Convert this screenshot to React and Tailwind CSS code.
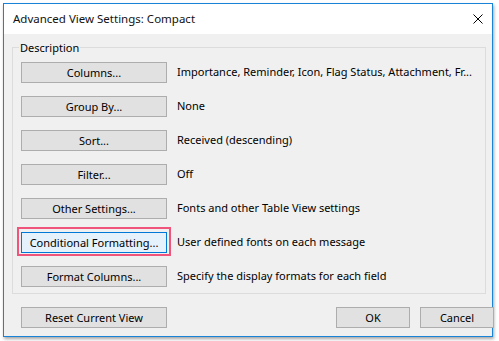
export default function App() {
  const rows = [
    ["Columns...", "Importance, Reminder, Icon, Flag Status, Attachment, Fr..."],
    ["Group By...", "None"],
    ["Sort...", "Received (descending)"],
    ["Filter...", "Off"],
    ["Other Settings...", "Fonts and other Table View settings"],
    ["Conditional Formatting...", "User defined fonts on each message"],
    ["Format Columns...", "Specify the display formats for each field"],
  ];
  const font = { fontFamily: '"Noto Sans", "Open Sans", sans-serif' };
  const btn =
    "h-[21px] border border-[#adadad] bg-[#e1e1e1] text-[11px] leading-none text-black flex items-center justify-center";
  return (
    <div className="w-[499px] h-[341px] bg-white pt-[3px] pl-[3px]" style={font}>
      <div className="w-[490px] h-[334px] border border-[#1883d7] flex flex-col shadow-[1px_2px_3px_rgba(0,0,0,0.35)]">
        <div className="h-[30px] bg-white flex items-center justify-between pl-[9px] pr-[9px]">
          <span className="text-[11.5px] text-[#111]">Advanced View Settings: Compact</span>
          <svg width="10" height="10" viewBox="0 0 10 10" className="mt-[-1px]">
            <path d="M0.5 0.5 L9.5 9.5 M9.5 0.5 L0.5 9.5" stroke="#000" strokeWidth="1" />
          </svg>
        </div>
        <div className="flex-1 bg-[#f0f0f0] flex flex-col pl-[8px]">
          <fieldset className="mt-[6px] w-[474px] border border-[#dcdcdc] pl-[8px] pt-[7px] pb-[6px] flex flex-col gap-[13px]">
            <legend className="text-[11px] leading-[15px] text-black px-[1px] ml-[-2px]">Description</legend>
            {rows.map(([b, d], i) => (
              <div key={b} className="flex items-center gap-[10px]">
                {i === 5 ? (
                  <div className="relative">
                    <div className="absolute left-[-4px] top-[-5px] w-[154px] h-[29px] border-2 border-[#f0547a] pointer-events-none" />
                    <div className={btn + " w-[146px] !border-[#0078d7] !bg-[#e5f1fb]"}>{b}</div>
                  </div>
                ) : (
                  <div className={btn + " w-[146px]"}>{b}</div>
                )}
                <span className="text-[11px] text-black whitespace-nowrap">{d}</span>
              </div>
            ))}
          </fieldset>
          <div className="mt-[13px] flex items-center pl-[9px] w-[482px]">
            <div className={btn + " w-[146px]"}>Reset Current View</div>
            <div className="flex-1" />
            <div className={btn + " w-[74px]"}>OK</div>
            <div className={btn + " w-[74px] ml-[10px]"}>Cancel</div>
          </div>
        </div>
      </div>
    </div>
  );
}
